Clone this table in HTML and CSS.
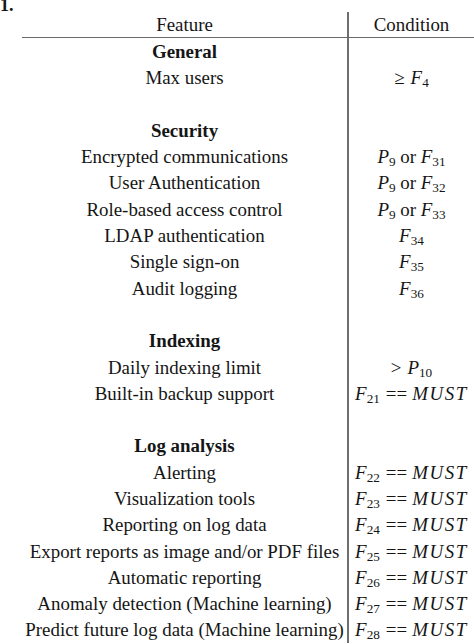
FILE: index.html
```html
<!DOCTYPE html>
<html>
<head>
<meta charset="utf-8">
<link rel="stylesheet" href="styles.css">
</head>
<body>
<div class="caption"><span class="caption-text">1.</span></div>
<table class="tbl">
  <colgroup><col class="c1"><col class="c2"></colgroup>
  <thead>
    <tr><th>Feature</th><th class="cond">Condition</th></tr>
  </thead>
  <tbody>
    <tr><td class="sec">General</td><td class="cond"></td></tr>
    <tr><td>Max users</td><td class="cond"><span class="rel">&ge;</span><i>F</i><sub>4</sub></td></tr>
    <tr><td></td><td class="cond"></td></tr>
    <tr><td class="sec">Security</td><td class="cond"></td></tr>
    <tr><td>Encrypted communications</td><td class="cond"><i>P</i><sub>9</sub> or <i>F</i><sub>31</sub></td></tr>
    <tr><td>User Authentication</td><td class="cond"><i>P</i><sub>9</sub> or <i>F</i><sub>32</sub></td></tr>
    <tr><td>Role-based access control</td><td class="cond"><i>P</i><sub>9</sub> or <i>F</i><sub>33</sub></td></tr>
    <tr><td>LDAP authentication</td><td class="cond"><i>F</i><sub>34</sub></td></tr>
    <tr><td>Single sign-on</td><td class="cond"><i>F</i><sub>35</sub></td></tr>
    <tr><td>Audit logging</td><td class="cond"><i>F</i><sub>36</sub></td></tr>
    <tr><td></td><td class="cond"></td></tr>
    <tr><td class="sec">Indexing</td><td class="cond"></td></tr>
    <tr><td>Daily indexing limit</td><td class="cond"><span class="rel">&gt;</span><i>P</i><sub>10</sub></td></tr>
    <tr><td>Built-in backup support</td><td class="cond"><i>F</i><sub>21</sub><span class="op">==</span><i class="must">MUST</i></td></tr>
    <tr><td></td><td class="cond"></td></tr>
    <tr><td class="sec">Log analysis</td><td class="cond"></td></tr>
    <tr><td>Alerting</td><td class="cond"><i>F</i><sub>22</sub><span class="op">==</span><i class="must">MUST</i></td></tr>
    <tr><td>Visualization tools</td><td class="cond"><i>F</i><sub>23</sub><span class="op">==</span><i class="must">MUST</i></td></tr>
    <tr><td>Reporting on log data</td><td class="cond"><i>F</i><sub>24</sub><span class="op">==</span><i class="must">MUST</i></td></tr>
    <tr><td>Export reports as image and/or PDF files</td><td class="cond"><i>F</i><sub>25</sub><span class="op">==</span><i class="must">MUST</i></td></tr>
    <tr><td>Automatic reporting</td><td class="cond"><i>F</i><sub>26</sub><span class="op">==</span><i class="must">MUST</i></td></tr>
    <tr><td>Anomaly detection (Machine learning)</td><td class="cond"><i>F</i><sub>27</sub><span class="op">==</span><i class="must">MUST</i></td></tr>
    <tr><td>Predict future log data (Machine learning)</td><td class="cond"><i>F</i><sub>28</sub><span class="op">==</span><i class="must">MUST</i></td></tr>
  </tbody>
</table>
</body>
</html>
```
FILE: styles.css
```css
html, body {
  margin: 0;
  padding: 0;
  background: #ffffff;
}
body {
  font-family: "Liberation Serif", "DejaVu Serif", serif;
  color: #151515;
  overflow: hidden;
}
.caption {
  height: 12px;
  overflow: hidden;
  display: flex;
  align-items: flex-end;
  font-weight: bold;
  font-size: 18px;
  line-height: 14px;
}
.tbl {
  margin-left: 22px;
  width: 452px;
  border-collapse: separate;
  border-spacing: 0;
  table-layout: fixed;
  font-size: 18.9px;
}
.c1 { width: 325px; }
.c2 { width: 127px; }
.tbl th, .tbl td {
  height: 24.3px;
  padding: 2px 0 0 0;
  text-align: center;
  vertical-align: middle;
  white-space: nowrap;
  font-weight: normal;
  line-height: 20px;
}
.tbl th {
  border-bottom: 1.5px solid #6a6a6a;
  height: 22.8px;
  padding-top: 2px;
}
.tbl .cond {
  border-left: 2px solid #6e6e6e;
}
.tbl .sec {
  font-weight: bold;
}
.tbl sub {
  font-size: 70%;
  font-style: normal;
  vertical-align: -0.25em;
  line-height: 0;
}
.tbl i {
  font-style: italic;
}
.tbl .must {
  letter-spacing: 1.6px;
}
.tbl .op {
  margin: 0 5px 0 6px;
}
.tbl .rel {
  margin-right: 6px;
}
```
